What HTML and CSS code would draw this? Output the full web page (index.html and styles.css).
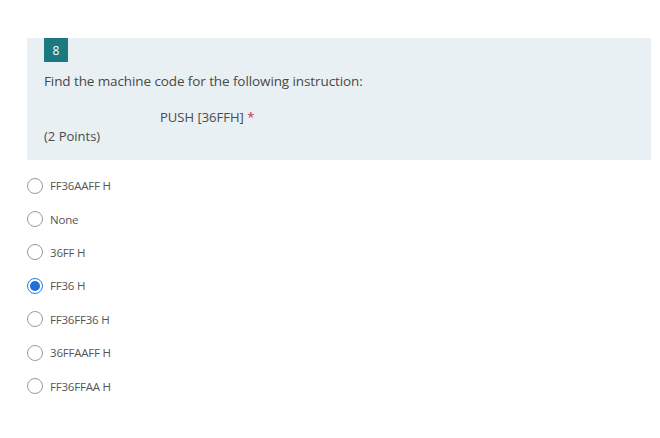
FILE: index.html
```html
<!DOCTYPE html>
<html>
<head>
<meta charset="utf-8">
<link rel="stylesheet" href="styles.css">
</head>
<body>
<div class="page">
  <section class="question">
    <div class="badge">8</div>
    <p class="title">Find the machine code for the following instruction:</p>
    <p class="instr">PUSH [36FFH] <span class="req">*</span></p>
    <p class="points">(2 Points)</p>
  </section>
  <ul class="options">
    <li class="opt"><span class="radio"></span><span class="label">FF36AAFF H</span></li>
    <li class="opt"><span class="radio"></span><span class="label">None</span></li>
    <li class="opt"><span class="radio"></span><span class="label">36FF H</span></li>
    <li class="opt"><span class="radio checked"></span><span class="label">FF36 H</span></li>
    <li class="opt"><span class="radio"></span><span class="label">FF36FF36 H</span></li>
    <li class="opt"><span class="radio"></span><span class="label">36FFAAFF H</span></li>
    <li class="opt"><span class="radio"></span><span class="label">FF36FFAA H</span></li>
  </ul>
</div>
</body>
</html>
```
FILE: styles.css
```css
* { box-sizing: border-box; }
html, body { margin: 0; padding: 0; background: #fff; }
body { font-family: "Open Sans", "Noto Sans", sans-serif; color: #444; }
.page { padding: 38px 9px 0 27px; }
.question {
  background: #e8f0f3;
  padding: 0 17px 0 17px;
  height: 122px;
  display: flex;
  flex-direction: column;
  align-items: flex-start;
}
.badge {
  width: 24px; height: 24px;
  background: #1b7a80;
  color: #fff;
  font-size: 12px;
  display: flex; align-items: center; justify-content: center;
}
.title { margin: 9px 0 0; font-size: 13.5px; line-height: 20px; color: #484848; letter-spacing: -0.1px; }
.instr { margin: 17px 0 0 116px; font-size: 13px; line-height: 18px; color: #4a4a4a; }
.req { color: #c4314b; }
.points { margin: 1px 0 0; font-size: 13px; line-height: 18px; color: #4a4a4a; }
.options { list-style: none; margin: 9px 0 0; padding: 0; display: flex; flex-direction: column; }
.opt { display: flex; align-items: center; height: 33.4px; }
.radio {
  width: 16px; height: 16px; border-radius: 50%;
  border: 1px solid #9a9a9a;
  flex: none;
  position: relative;
}
.radio.checked { border-color: #2a78d8; }
.radio.checked::after {
  content: ""; position: absolute; left: 2px; top: 2px;
  width: 10px; height: 10px; border-radius: 50%; background: #1e6fd9;
}
.label { margin-left: 7px; font-size: 11.5px; color: #555; letter-spacing: -0.2px; }
```
